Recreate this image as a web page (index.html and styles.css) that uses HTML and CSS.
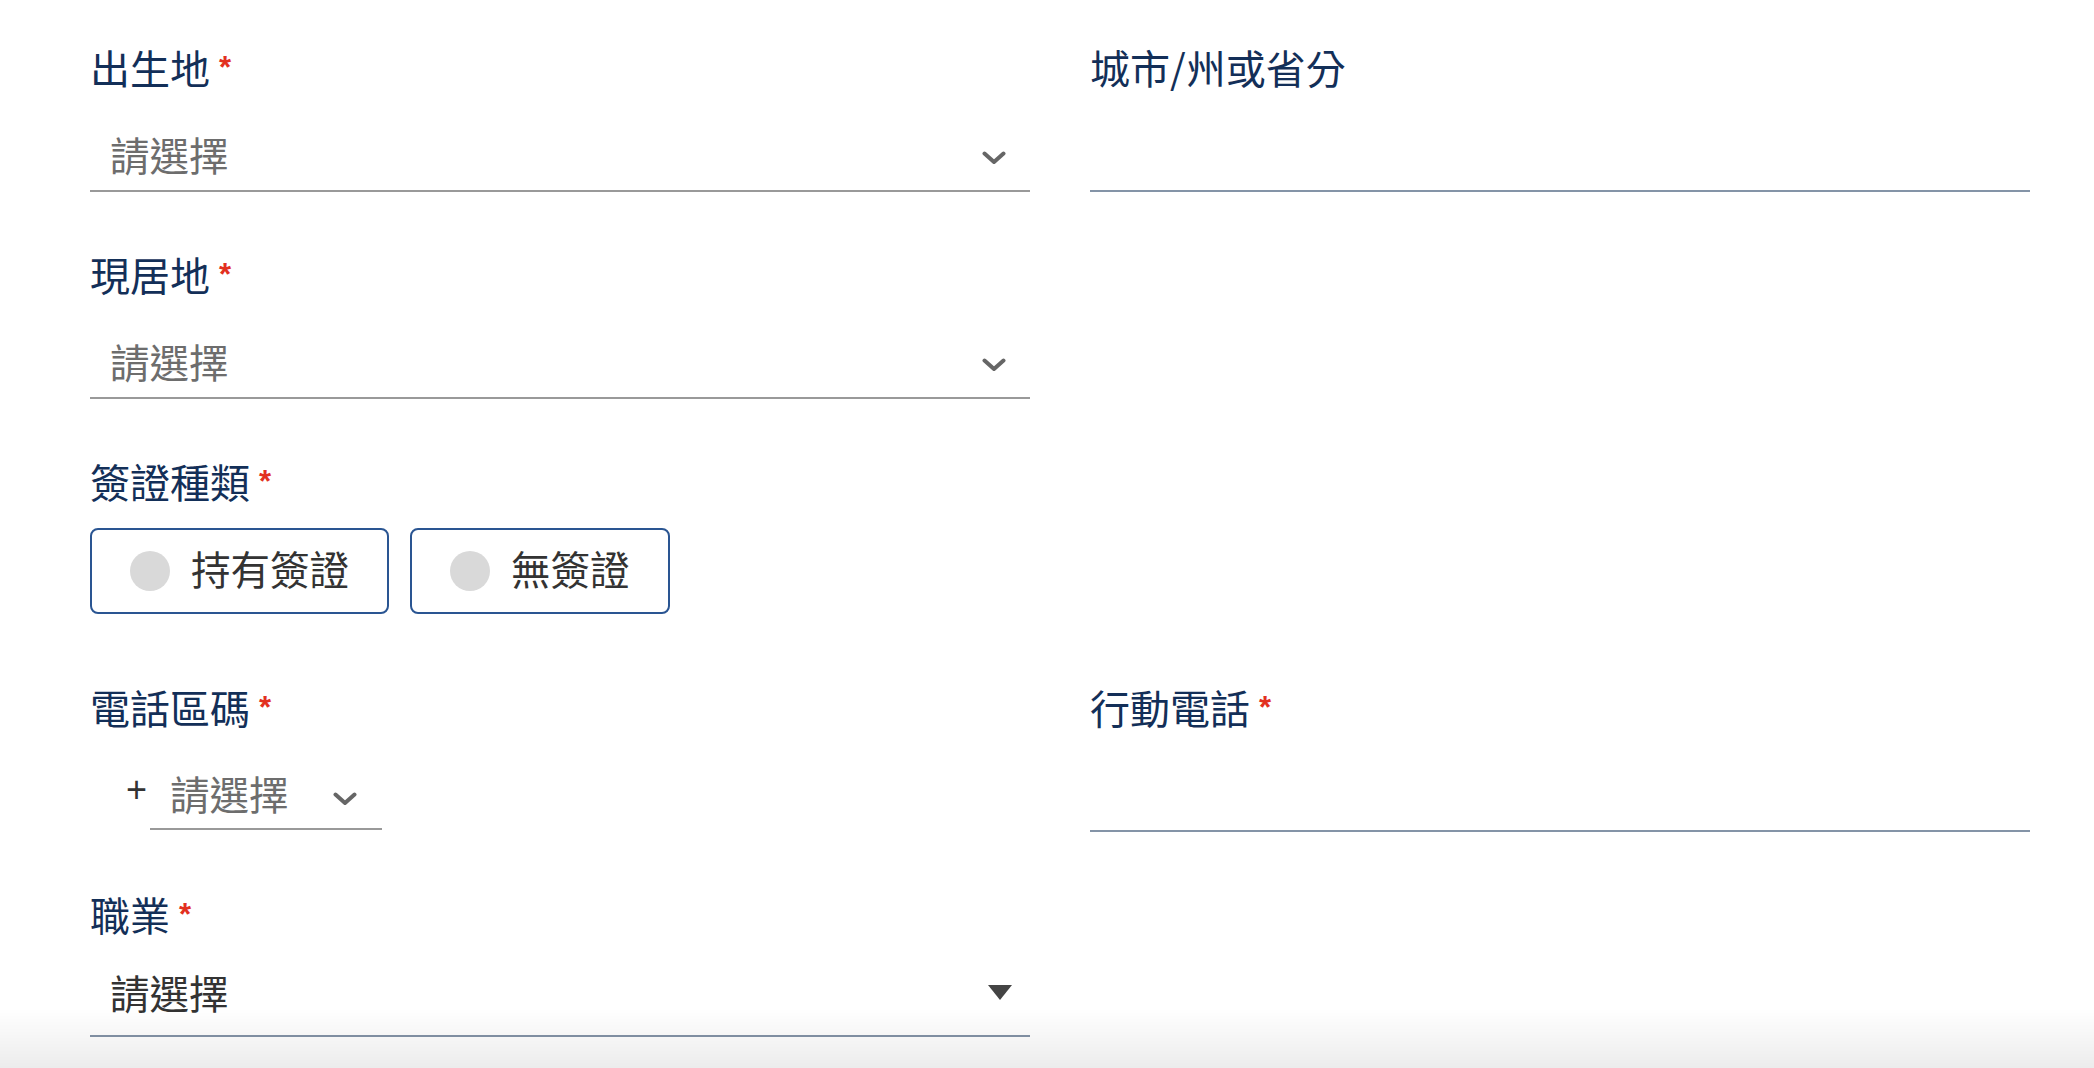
FILE: index.html
```html
<!DOCTYPE html>
<html lang="zh-Hant">
<head>
<meta charset="utf-8">
<title>表單</title>
<link rel="stylesheet" href="styles.css">
</head>
<body>
<form class="form">
  <div class="field">
    <div class="label">出生地<span class="req">*</span></div>
    <div class="select gray-line">
      <span class="placeholder">請選擇</span>
      <svg class="chev" viewBox="0 0 24 14"><path d="M2.5 2.5 L12 11 L21.5 2.5" /></svg>
    </div>
  </div>
  <div class="field">
    <div class="label">城市/州或省分</div>
    <div class="text-input blue-line"></div>
  </div>

  <div class="field">
    <div class="label">現居地<span class="req">*</span></div>
    <div class="select gray-line">
      <span class="placeholder">請選擇</span>
      <svg class="chev" viewBox="0 0 24 14"><path d="M2.5 2.5 L12 11 L21.5 2.5" /></svg>
    </div>
  </div>
  <div class="field empty"></div>

  <div class="field visa">
    <div class="label">簽證種類<span class="req">*</span></div>
    <div class="radios">
      <label class="radio"><span class="dot"></span><span class="radio-text">持有簽證</span></label>
      <label class="radio"><span class="dot"></span><span class="radio-text">無簽證</span></label>
    </div>
  </div>
  <div class="field empty"></div>

  <div class="field">
    <div class="label">電話區碼<span class="req">*</span></div>
    <div class="phone">
      <span class="plus">+</span>
      <div class="select small gray-line">
        <span class="placeholder">請選擇</span>
        <svg class="chev" viewBox="0 0 24 14"><path d="M2.5 2.5 L12 11 L21.5 2.5" /></svg>
      </div>
    </div>
  </div>
  <div class="field">
    <div class="label">行動電話<span class="req">*</span></div>
    <div class="text-input blue-line"></div>
  </div>

  <div class="field">
    <div class="label">職業<span class="req">*</span></div>
    <div class="native blue-line">
      <span class="value">請選擇</span>
      <span class="tri"></span>
    </div>
  </div>
  <div class="field empty"></div>
</form>
<div class="bottom-shade"></div>
</body>
</html>
```
FILE: styles.css
```css
html, body {
  margin: 0;
  padding: 0;
  background: #ffffff;
}
body {
  font-family: "Noto Sans CJK TC", "Noto Sans", sans-serif;
  height: 1068px;
  overflow: hidden;
}
.form {
  display: grid;
  grid-template-columns: 940px 940px;
  column-gap: 60px;
  row-gap: 59px;
  padding: 44px 0 0 90px;
}
.field {
  display: flex;
  flex-direction: column;
}
.label {
  font-size: 40px;
  line-height: 46px;
  height: 46px;
  color: #132f58;
  font-weight: 400;
  margin-bottom: 32px;
  white-space: nowrap;
}
.req {
  display: inline-block;
  color: #e2301f;
  font-size: 31px;
  line-height: 30px;
  vertical-align: top;
  margin-left: 9px;
  position: relative;
  top: 9px;
  font-family: "Liberation Sans", sans-serif;
  font-weight: 700;
}
.gray-line { border-bottom: 2px solid #999999; }
.blue-line { border-bottom: 2px solid #8494a7; }

.select {
  height: 68px;
  display: flex;
  align-items: center;
  justify-content: space-between;
  padding: 0 24px 0 20px;
}
.placeholder {
  font-size: 39.5px;
  color: #6d6d6d;
  line-height: 52px;
  padding-bottom: 5px;
}
.chev {
  width: 24px;
  height: 14px;
  margin-top: 4px;
}
.chev path {
  fill: none;
  stroke: #666666;
  stroke-width: 4;
  stroke-linecap: round;
  stroke-linejoin: round;
}
.text-input {
  height: 68px;
}

.visa .label { margin-bottom: 24px; }
.visa { margin-bottom: 11px; }
.radios {
  display: flex;
  gap: 21px;
}
.radio {
  height: 82px;
  border: 2px solid #2a5592;
  border-radius: 8px;
  display: flex;
  align-items: center;
  padding: 0 38px;
  gap: 21px;
}
.dot {
  width: 40px;
  height: 40px;
  border-radius: 50%;
  background: #d9d9d9;
  flex: none;
}
.radio-text {
  font-size: 39.5px;
  color: #333333;
  line-height: 52px;
  padding-bottom: 6px;
}

.phone {
  display: flex;
  align-items: flex-start;
}
.plus {
  width: 60px;
  padding-left: 36px;
  box-sizing: border-box;
  font-size: 36px;
  line-height: 52px;
  margin-top: 2px;
  color: #333333;
  font-family: "Liberation Sans", sans-serif;
}
.select.small {
  width: 232px;
  box-sizing: border-box;
  padding: 0 25px 0 20px;
}
.select.small .placeholder { padding-bottom: 4px; }
.select.small .chev { margin-top: 8px; }

.native {
  height: 68px;
  display: flex;
  align-items: center;
  justify-content: space-between;
  padding: 0 18px 14px 20px;
  box-sizing: border-box;
}
.native .value {
  font-size: 39.5px;
  color: #333333;
  line-height: 52px;
  padding-bottom: 7px;
}
.tri {
  width: 0;
  height: 0;
  border-left: 12px solid transparent;
  border-right: 12px solid transparent;
  border-top: 15px solid #444444;
  margin-top: -6px;
}

.bottom-shade {
  position: fixed;
  left: 0;
  right: 0;
  bottom: 0;
  height: 60px;
  background: linear-gradient(to bottom, rgba(0,0,0,0), rgba(0,0,0,0.075));
  pointer-events: none;
}
```
